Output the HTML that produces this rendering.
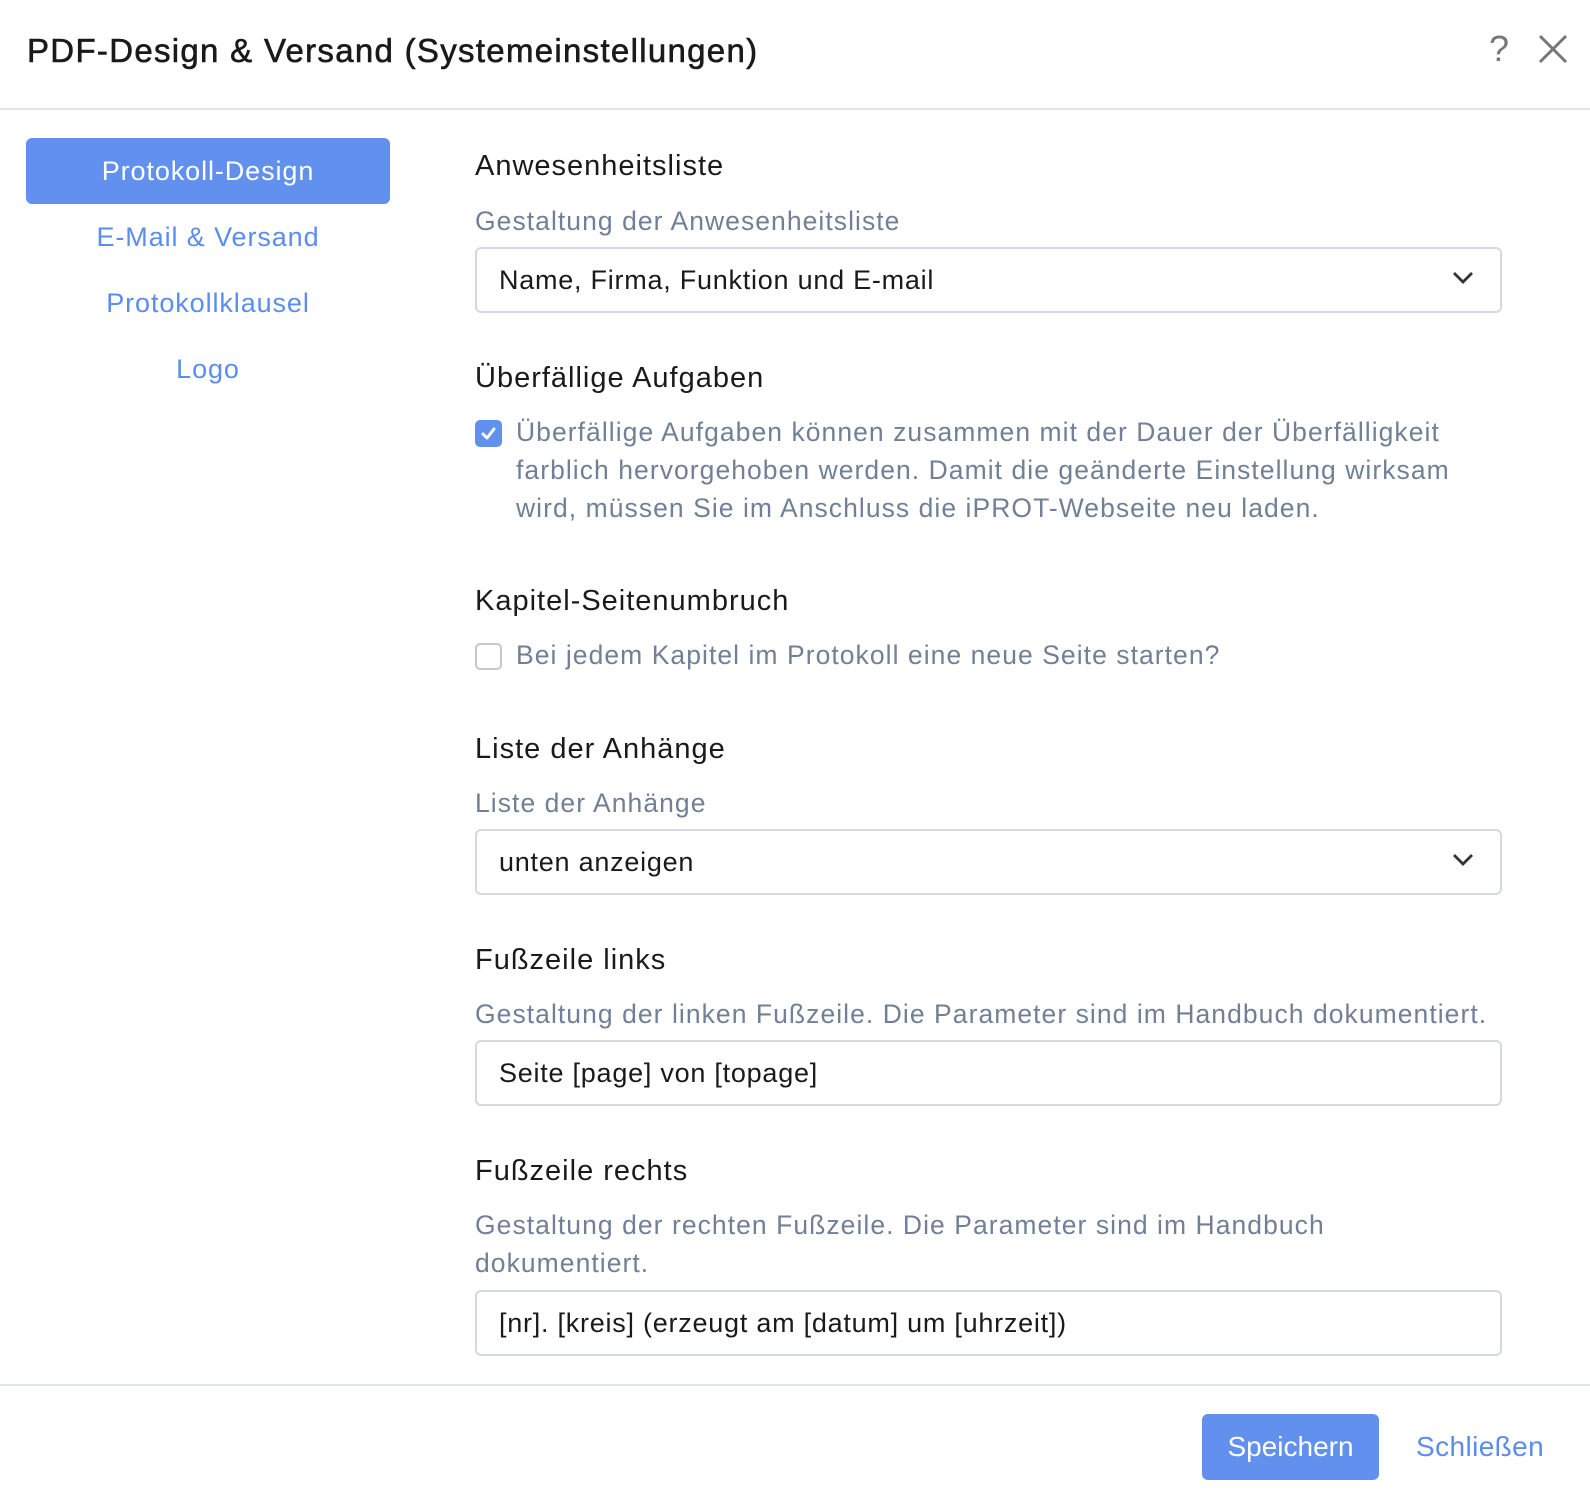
<!DOCTYPE html>
<html><head><meta charset="utf-8"><style>
*{margin:0;padding:0;box-sizing:border-box}
body{width:1590px;height:1508px;background:#fff;font-family:"Liberation Sans",sans-serif;position:relative;overflow:hidden;color:#1a1a1a}
.a{position:absolute;white-space:nowrap}
.h{font-size:29px;color:#1a1a1a;letter-spacing:1px}
.l{font-size:26.5px;color:#718096;letter-spacing:1.05px}
.t{font-size:26.5px;color:#718096;line-height:38px;letter-spacing:1.05px}
.box{position:absolute;left:475px;width:1027px;height:66px;border:2px solid #d5d9de;border-radius:6px;font-size:27px;color:#1a1a1a;padding-left:22px;line-height:62px;letter-spacing:0.75px}
.nav{position:absolute;left:26px;width:364px;text-align:center;font-size:27px;color:#5b8def;letter-spacing:0.9px}
.chev{position:absolute;right:26px;top:22px}
.cb{position:absolute;left:475px;width:27px;height:27px;border-radius:5px}
</style></head><body>
<div class="a" style="left:27px;top:32px;font-size:33px;color:#1a1a1a;-webkit-text-stroke:0.6px #1a1a1a;letter-spacing:1.3px">PDF-Design &amp; Versand (Systemeinstellungen)</div>
<div class="a" style="left:1489px;top:28px;font-size:36px;color:#777">?</div>
<svg class="a" style="left:1538px;top:34px" width="30" height="30" viewBox="0 0 30 30"><path d="M2 2L28 28M28 2L2 28" stroke="#777" stroke-width="3"/></svg>
<div class="a" style="left:0;top:108px;width:1590px;height:2px;background:#e2e6ea"></div>

<div class="a" style="left:26px;top:138px;width:364px;height:66px;background:#6190ee;border-radius:6px;color:#fff;font-size:27px;text-align:center;line-height:66px;letter-spacing:0.9px">Protokoll-Design</div>
<div class="nav" style="top:222px">E-Mail &amp; Versand</div>
<div class="nav" style="top:288px">Protokollklausel</div>
<div class="nav" style="top:354px">Logo</div>

<div class="a h" style="left:475px;top:150px">Anwesenheitsliste</div>
<div class="a l" style="left:475px;top:206px">Gestaltung der Anwesenheitsliste</div>
<div class="box" style="top:247px">Name, Firma, Funktion und E-mail<svg class="chev" width="22" height="14" viewBox="0 0 22 14"><path d="M2 2L11 11L20 2" fill="none" stroke="#333" stroke-width="2.8"/></svg></div>

<div class="a h" style="left:475px;top:362px">Überfällige Aufgaben</div>
<div class="cb" style="top:420px;background:#6190ee"><svg width="27" height="27" viewBox="0 0 27 27"><path d="M8 14L12 18L19 9" fill="none" stroke="#fff" stroke-width="3" stroke-linecap="round" stroke-linejoin="round"/></svg></div>
<div class="a t" style="left:516px;top:413px">Überfällige Aufgaben können zusammen mit der Dauer der Überfälligkeit<br>farblich hervorgehoben werden. Damit die geänderte Einstellung wirksam<br>wird, müssen Sie im Anschluss die iPROT-Webseite neu laden.</div>

<div class="a h" style="left:475px;top:585px">Kapitel-Seitenumbruch</div>
<div class="cb" style="top:643px;border:2px solid #c4c8cc"></div>
<div class="a t" style="left:516px;top:636px">Bei jedem Kapitel im Protokoll eine neue Seite starten?</div>

<div class="a h" style="left:475px;top:733px">Liste der Anhänge</div>
<div class="a l" style="left:475px;top:788px">Liste der Anhänge</div>
<div class="box" style="top:829px">unten anzeigen<svg class="chev" width="22" height="14" viewBox="0 0 22 14"><path d="M2 2L11 11L20 2" fill="none" stroke="#333" stroke-width="2.8"/></svg></div>

<div class="a h" style="left:475px;top:944px">Fußzeile links</div>
<div class="a l" style="left:475px;top:999px">Gestaltung der linken Fußzeile. Die Parameter sind im Handbuch dokumentiert.</div>
<div class="box" style="top:1040px">Seite [page] von [topage]</div>

<div class="a h" style="left:475px;top:1155px">Fußzeile rechts</div>
<div class="a t" style="left:475px;top:1206px">Gestaltung der rechten Fußzeile. Die Parameter sind im Handbuch<br>dokumentiert.</div>
<div class="box" style="top:1290px">[nr]. [kreis] (erzeugt am [datum] um [uhrzeit])</div>

<div class="a" style="left:0;top:1384px;width:1590px;height:2px;background:#e2e6ea"></div>
<div class="a" style="left:1202px;top:1414px;width:177px;height:66px;background:#6190ee;border-radius:6px;color:#fff;font-size:28px;text-align:center;line-height:66px">Speichern</div>
<div class="a" style="left:1416px;top:1431px;font-size:28px;color:#5b8def;letter-spacing:0.4px">Schließen</div>
</body></html>
